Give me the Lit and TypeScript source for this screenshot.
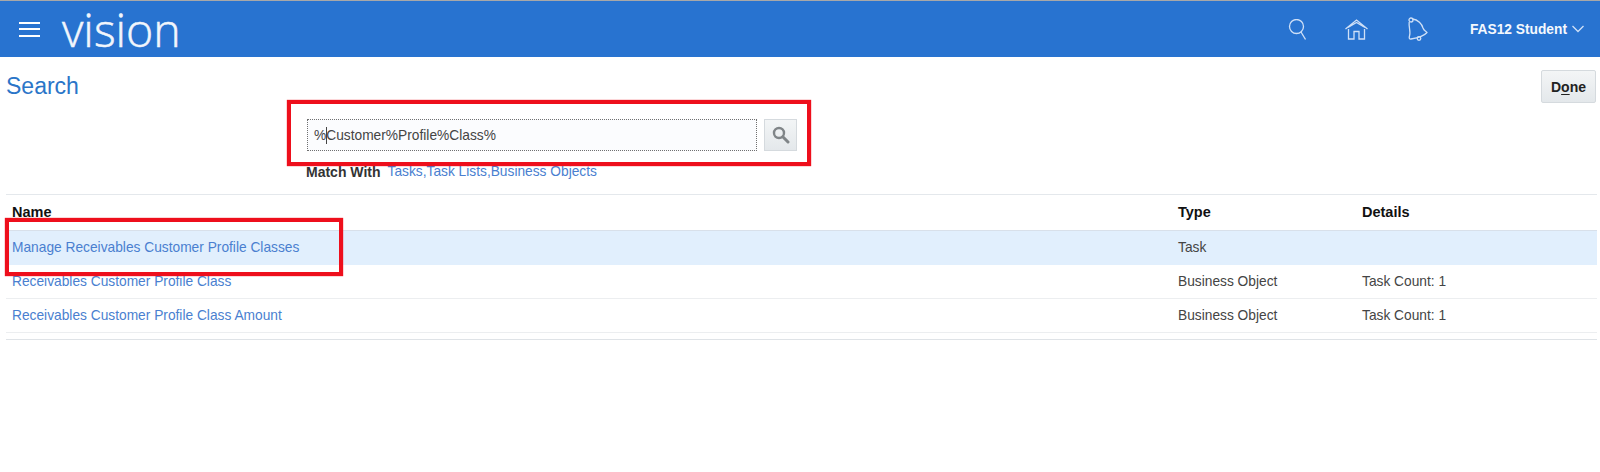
import { LitElement, html, css } from "lit";
import { customElement } from "lit/decorators.js";

@customElement("app-root")
export class AppRoot extends LitElement {
  static styles = css`
    :host { display: block; position: relative; width: 1600px; height: 472px; background: #fff; overflow: hidden;
      font-family: "Liberation Sans", Arial, sans-serif; font-size: 13.75px; color: #444; }
    .topbar { display: flex; align-items: center; height: 56px; background: #2873d0; border-top: 1px solid #a8a8a8; }
    .burger { display: flex; flex-direction: column; gap: 4.5px; margin-left: 19px; width: 21px; }
    .burger span { display: block; height: 2px; background: #fff; }
    .logo { margin-left: 22px; font-family: "Open Sans", sans-serif; font-weight: 300; font-size: 46.5px; line-height: 1; color: #f2f6fc; -webkit-text-stroke: 0.5px #f2f6fc; }
    .spacer { flex: 1; }
    .icon { display: block; flex: none; fill: none; stroke: #cfe0f7; stroke-width: 1.3; }
    .i-search { margin-right: 39px; }
    .i-home { margin-right: 40px; }
    .i-bell { margin-right: 42px; }
    .user { font-weight: 700; font-size: 13.75px; color: #f4f8fd; margin-right: 5px; }
    .chev { margin-right: 16px; }
    .title-row { display: flex; justify-content: space-between; align-items: flex-start; padding: 13px 4px 0 6px; height: 43px; box-sizing: border-box; }
    h1 { margin: 2px 0 0; font-weight: 400; font-size: 23px; line-height: 28px; color: #2a75c8; }
    .done { width: 55px; height: 33px; box-sizing: border-box; border: 1px solid #d5dade; border-radius: 2px; background: linear-gradient(#f3f5f6, #e4e8eb); font: 700 14px "Liberation Sans", Arial, sans-serif; color: #222; padding: 0; }
    .done u { text-underline-offset: 2px; }
    .search-row { display: flex; gap: 7px; margin: 19px 0 0 307px; }
    .field { width: 450px; height: 32px; box-sizing: border-box; border: 1px dotted #707070; background: #fbfcfe; display: flex; align-items: center; padding-left: 6px; color: #444; }
    .caret { display: inline-block; width: 1px; height: 17px; background: #444; margin: 0 -1px 0 0; }
    .go { width: 33px; height: 32px; box-sizing: border-box; border: 1px solid #d5dade; background: linear-gradient(#f3f5f6, #e4e8eb); display: flex; align-items: center; justify-content: center; }
    .match { margin: 13px 0 0 306px; display: flex; gap: 7px; line-height: 16px; }
    .match b { color: #333; font-size: 14px; }
    .match a, .name a { color: #4a7fd0; text-decoration: none; }
    .table { margin: 14px 3px 0 6px; border-top: 1px solid #e4e8ec; }
    .row { display: grid; grid-template-columns: 1166px 184px 1fr; height: 34px; padding-bottom: 1px; align-items: center; border-bottom: 1px solid #eceef0; box-sizing: border-box; }
    .row > div { padding-left: 6px; }
    .head { height: 36px; border-bottom: 1px solid #d8e0ea; font-weight: 700; font-size: 14.5px; color: #111; padding-bottom: 1px; }
    .sel { background: #e1effd; border-bottom-color: #e1effd; }
    .end { height: 6px; border-bottom: 1px solid #dfe3e7; }
    .mark { position: absolute; border: 4px solid #ee0f1c; box-sizing: border-box; box-shadow: 0 0 1px #ee0f1c; }
    .m1 { left: 287px; top: 100px; width: 524px; height: 66px; }
    .m2 { left: 5px; top: 218px; width: 338px; height: 58px; }
  `;

  render() {
    return html`
      <header class="topbar">
        <div class="burger"><span></span><span></span><span></span></div>
        <div class="logo">vision</div>
        <div class="spacer"></div>
        <svg class="icon i-search" width="18" height="21" viewBox="0 0 18 21"><circle cx="8.500" cy="7.500" r="7"/><path d="M13 13 L17.500 20.500"/></svg>
        <svg class="icon i-home" width="23" height="21" viewBox="0 0 23 21"><path d="M0.500 10 L11.500 1 L22.500 10 M3 8.500 L11.500 3.500 L20 8.500"/><path d="M3.500 10 V20 H9 V12.500 H14 V20 H19.500 V10"/></svg>
        <svg class="icon i-bell" width="20" height="24" viewBox="0 0 20 24"><circle cx="3" cy="3" r="2"/><circle cx="11" cy="21.500" r="1.800"/><path d="M4.500 2 C10 2.500 14 7 15 11 C16 14 18 14 19 15.500 C16 19 9 21 3 22 C1.500 22.300 0.800 21 1.500 19 C3 15 0.500 10 1.200 5"/></svg>
        <span class="user">FAS12 Student</span>
        <svg class="icon chev" width="12" height="8" viewBox="0 0 12 8"><path d="M0.500 1 L6 6.500 L11.500 1"/></svg>
      </header>
      <main>
        <div class="title-row">
          <h1>Search</h1>
          <button class="done">D<u>o</u>ne</button>
        </div>
        <div class="search-row">
          <div class="field">%<span class="caret"></span>Customer%Profile%Class%</div>
          <div class="go">
            <svg width="18" height="18" viewBox="0 0 18 18"><circle cx="7" cy="7" r="5" fill="none" stroke="#808588" stroke-width="2.400"/><path d="M10.800 10.800 L16 16" stroke="#808588" stroke-width="3" stroke-linecap="round"/></svg>
          </div>
        </div>
        <div class="match"><b>Match With</b> <a>Tasks,Task Lists,Business Objects</a></div>
        <section class="table">
          <div class="row head"><div>Name</div><div>Type</div><div>Details</div></div>
          <div class="row sel"><div class="name"><a>Manage Receivables Customer Profile Classes</a></div><div>Task</div><div></div></div>
          <div class="row"><div class="name"><a>Receivables Customer Profile Class</a></div><div>Business Object</div><div>Task Count: 1</div></div>
          <div class="row"><div class="name"><a>Receivables Customer Profile Class Amount</a></div><div>Business Object</div><div>Task Count: 1</div></div>
          <div class="end"></div>
        </section>
      </main>
      <div class="mark m1"></div>
      <div class="mark m2"></div>
    `;
  }
}
